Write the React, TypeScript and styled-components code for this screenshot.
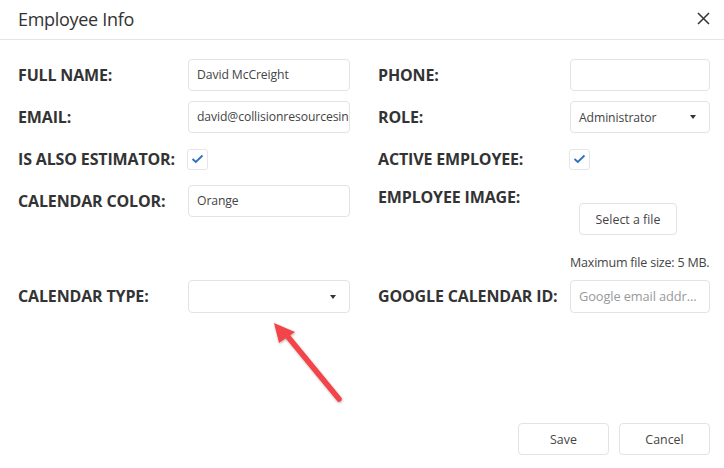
import styled, { createGlobalStyle } from 'styled-components'

const GlobalStyle = createGlobalStyle`
  html, body {
    margin: 0;
    padding: 0;
    background: #ffffff;
  }
  body {
    font-family: "Segoe UI", "Open Sans", "Noto Sans", sans-serif;
    color: #333;
  }
`

const Dialog = styled.div`
  position: relative;
  width: 724px;
  height: 468px;
  display: flex;
  flex-direction: column;
  background: #fff;
  overflow: hidden;
`

const Header = styled.div`
  height: 40px;
  box-sizing: border-box;
  display: flex;
  align-items: center;
  justify-content: space-between;
  padding: 0 14px 2px 18px;
  border-bottom: 1px solid #e6e6e6;
`

const Title = styled.h1`
  margin: 0;
  font-size: 18px;
  font-weight: 400;
  color: #333;
  letter-spacing: -0.3px;
`

const CloseButton = styled.button`
  border: 0;
  background: none;
  padding: 0;
  width: 14px;
  height: 14px;
  display: flex;
  align-items: center;
  justify-content: center;
  cursor: pointer;
  color: #333;
`

const Form = styled.div`
  display: grid;
  grid-template-columns: 170px 162px 220px 140px;
  grid-template-rows: 32px 32px 32px 85px 33px;
  row-gap: 10px;
  padding: 19px 14px 0 18px;
  align-items: start;
`

const Label = styled.label<{ $top?: boolean; $right?: boolean }>`
  font-size: 16px;
  font-weight: 700;
  color: #333;
  line-height: ${(p) => (p.$top ? '24px' : '32px')};
  padding-left: ${(p) => (p.$right ? '28px' : '0')};
  white-space: nowrap;
  letter-spacing: -0.15px;
`

const TextBox = styled.div<{ $placeholder?: boolean }>`
  box-sizing: border-box;
  height: 100%;
  border: 1px solid #e3e3e3;
  border-radius: 4px;
  padding: ${(p) => (p.$placeholder ? '0 11px 0 8px' : '0 8px')};
  font-size: ${(p) => (p.$placeholder ? '12.8px' : '12.2px')};
  line-height: 30px;
  letter-spacing: -0.1px;
  color: ${(p) => (p.$placeholder ? '#9a9a9a' : '#444')};
  white-space: nowrap;
  overflow: hidden;
  text-overflow: ${(p) => (p.$placeholder ? 'ellipsis' : 'clip')};
`

const Select = styled.div`
  box-sizing: border-box;
  height: 100%;
  border: 1px solid #e3e3e3;
  border-radius: 4px;
  padding: 0 13px 0 8px;
  display: flex;
  align-items: center;
  justify-content: space-between;
  font-size: 12.2px;
  letter-spacing: -0.1px;
  color: #444;
`

const Caret = styled.span`
  width: 0;
  height: 0;
  border-left: 3.5px solid transparent;
  border-right: 3.5px solid transparent;
  border-top: 4px solid #333;
`

const CheckCell = styled.div`
  height: 32px;
  display: flex;
  align-items: center;
`

const Checkbox = styled.span`
  box-sizing: border-box;
  width: 21px;
  height: 21px;
  border: 1px solid #e6e6e6;
  border-radius: 3px;
  display: flex;
  align-items: center;
  justify-content: center;
  margin-left: -1px;
  color: #2d6fc0;
`

const Upload = styled.div`
  display: flex;
  flex-direction: column;
  align-items: flex-start;
  padding-top: 18px;
`

const Button = styled.button<{ $width?: number }>`
  box-sizing: border-box;
  height: 32px;
  width: ${(p) => (p.$width ? `${p.$width}px` : 'auto')};
  padding: 0 16px;
  background: #fff;
  border: 1px solid #e3e3e3;
  border-radius: 4px;
  font-family: inherit;
  font-size: 12.4px;
  color: #444;
`

const FileButton = styled(Button)`
  margin-left: 9px;
  width: 98px;
  padding: 0;
`

const Hint = styled.div`
  margin-top: 19px;
  font-size: 12.5px;
  color: #444;
  white-space: nowrap;
  letter-spacing: -0.2px;
`

const Empty = styled.div``

const Footer = styled.div`
  margin-top: auto;
  display: flex;
  justify-content: flex-end;
  gap: 10px;
  padding: 0 14px 13px 0;
`

const ArrowLayer = styled.svg`
  position: absolute;
  left: 260px;
  top: 312px;
  width: 100px;
  height: 100px;
  pointer-events: none;
`

function Check() {
  return (
    <svg width="13" height="10" viewBox="0 0 13 10">
      <path d="M1.5 5 L4.8 8 L11.5 1.5" fill="none" stroke="currentColor" strokeWidth="1.8" />
    </svg>
  )
}

export default function App() {
  return (
    <Dialog>
      <GlobalStyle />
      <Header>
        <Title>Employee Info</Title>
        <CloseButton aria-label="Close">
          <svg width="13" height="13" viewBox="0 0 13 13">
            <path d="M1 1 L12 12 M12 1 L1 12" stroke="#333" strokeWidth="1.5" />
          </svg>
        </CloseButton>
      </Header>

      <Form>
        <Label>FULL NAME:</Label>
        <TextBox>David McCreight</TextBox>
        <Label $right>PHONE:</Label>
        <TextBox />

        <Label>EMAIL:</Label>
        <TextBox>david@collisionresourcesinc.com</TextBox>
        <Label $right>ROLE:</Label>
        <Select>
          Administrator
          <Caret />
        </Select>

        <Label>IS ALSO ESTIMATOR:</Label>
        <CheckCell>
          <Checkbox>
            <Check />
          </Checkbox>
        </CheckCell>
        <Label $right>ACTIVE EMPLOYEE:</Label>
        <CheckCell>
          <Checkbox>
            <Check />
          </Checkbox>
        </CheckCell>

        <Label>CALENDAR COLOR:</Label>
        <TextBox style={{ height: 32 }}>Orange</TextBox>
        <Label $right $top>EMPLOYEE IMAGE:</Label>
        <Upload>
          <FileButton>Select a file</FileButton>
          <Hint>Maximum file size: 5 MB.</Hint>
        </Upload>

        <Label>CALENDAR TYPE:</Label>
        <Select>
          <Empty />
          <Caret />
        </Select>
        <Label $right>GOOGLE CALENDAR ID:</Label>
        <TextBox $placeholder>Google email address</TextBox>
      </Form>

      <Footer>
        <Button $width={91}>Save</Button>
        <Button $width={91}>Cancel</Button>
      </Footer>

      <ArrowLayer viewBox="0 0 100 100">
        <defs>
          <filter id="shadow" x="-20%" y="-20%" width="140%" height="140%">
            <feDropShadow dx="0.5" dy="1" stdDeviation="1" floodColor="#000" floodOpacity="0.3" />
          </filter>
        </defs>
        <g filter="url(#shadow)">
          <line x1="79" y1="87" x2="24" y2="20" stroke="#f2454a" strokeWidth="5.5" strokeLinecap="round" />
          <polygon points="14,11 35,20 19,31" fill="#f2454a" />
        </g>
      </ArrowLayer>
    </Dialog>
  )
}
